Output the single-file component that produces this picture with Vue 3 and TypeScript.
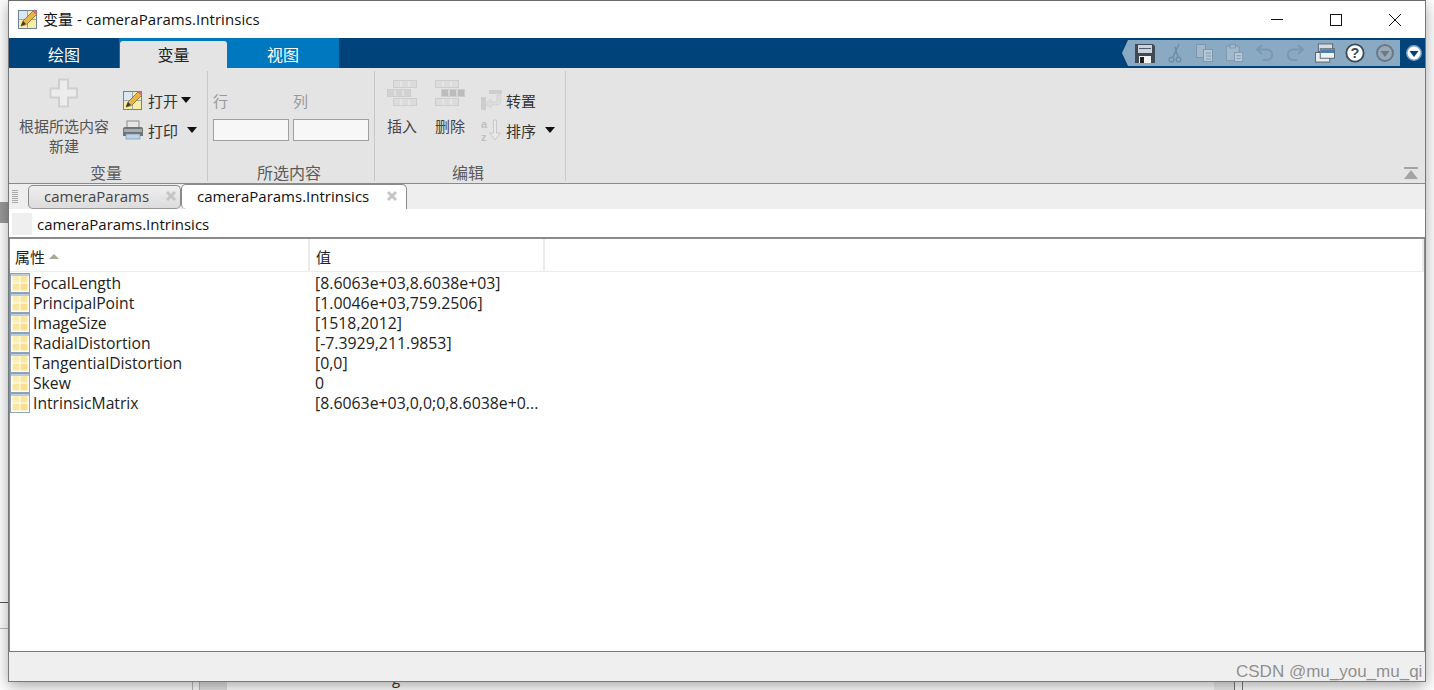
<script setup lang="ts">
const rows: [string, string][] = [
  ['FocalLength', '[8.6063e+03,8.6038e+03]'],
  ['PrincipalPoint', '[1.0046e+03,759.2506]'],
  ['ImageSize', '[1518,2012]'],
  ['RadialDistortion', '[-7.3929,211.9853]'],
  ['TangentialDistortion', '[0,0]'],
  ['Skew', '0'],
  ['IntrinsicMatrix', '[8.6063e+03,0,0;0,8.6038e+0...'],
]
</script>

<template>
  <div class="desk">
    <div class="bg-block"></div>
    <div class="bg-line dark"></div>
    <div class="bg-line light"></div>
    <div class="bg-bottom"><i></i><i></i><b></b></div>
    <span class="bg-g">g</span>
    <div class="bg-right"><i></i><i></i></div>

    <div class="window">
      <header class="titlebar">
        <svg class="app-icon" width="20" height="20" viewBox="0 0 20 20">
          <rect x="0.5" y="1.5" width="18" height="18" fill="#f7eea6" stroke="#6f8299" />
          <rect x="1" y="2" width="8" height="8" fill="#dbe7f3" />
          <path d="M9.5 2v17M1 10.500h17" stroke="#9aa7b5" />
          <path d="M3 17l2-5L15 2l3.500 3.500-10 10z" fill="#e6b64a" stroke="#8a6a28" stroke-width=".8" />
          <path d="M15 2l1.500-1.500 3 3L18 5z" fill="#e0648a" />
          <path d="M3 17l2-5 3 3z" fill="#3a3a3a" />
        </svg>
        <span class="title-text">变量 - cameraParams.Intrinsics</span>
        <div class="win-btns">
          <svg width="59" height="38" viewBox="0 0 59 38"><path d="M23 18.500h12" stroke="#111" /></svg>
          <svg width="59" height="38" viewBox="0 0 59 38"><rect x="23.500" y="13.500" width="11" height="11" fill="none" stroke="#111" /></svg>
          <svg width="59" height="38" viewBox="0 0 59 38"><path d="M23 13l12 12M35 13L23 25" stroke="#111" /></svg>
        </div>
      </header>

      <nav class="tabstrip">
        <div class="rtab">绘图</div>
        <div class="rtab-group">
          <div class="rtab active">变量</div>
          <div class="rtab light">视图</div>
        </div>
        <div class="qa">
          <svg width="20" height="20" viewBox="0 0 20 20"><path d="M0 1h18l2 2v17H0z" fill="#3f4a55" /><rect x="3" y="2" width="14" height="8" fill="#c9d3dc" /><path d="M4 5.500h12" stroke="#4f5b67" /><rect x="4" y="13" width="12" height="7" fill="#f2f2f2" /><rect x="5" y="14" width="4" height="6" fill="#222" /></svg>
          <svg width="20" height="20" viewBox="0 0 20 20" fill="none" stroke="#6f8ca6" stroke-width="1.400"><path d="M14 1l-6 13M10 4l3 10" /><circle cx="6.500" cy="16.500" r="2.400" /><circle cx="13.500" cy="16.500" r="2.400" /></svg>
          <svg width="20" height="20" viewBox="0 0 20 20" fill="#a2b9cc" stroke="#7d97ae"><rect x="1.500" y="1.500" width="9" height="13" /><rect x="8.500" y="6.500" width="9" height="12" fill="#b7c9d8" /><path d="M11 10h5M11 13h5M11 16h5" /></svg>
          <svg width="22" height="22" viewBox="0 0 22 22" fill="#a2b9cc" stroke="#7d97ae"><rect x="1.500" y="3.500" width="14" height="16" /><rect x="5.500" y="1.500" width="6" height="4" /><rect x="10.500" y="10.500" width="9" height="10" fill="#b7c9d8" /><path d="M12.500 14h5M12.500 17h5" /></svg>
          <svg width="20" height="20" viewBox="0 0 20 20" fill="none" stroke="#7d97ae" stroke-width="2"><path d="M7 2L2 6.500 7 11" /><path d="M2 6.500h10a5 5 0 0 1 0 10.500H8" /></svg>
          <svg width="20" height="20" viewBox="0 0 20 20" fill="none" stroke="#7d97ae" stroke-width="2"><path d="M13 2l5 4.500-5 4.500" /><path d="M18 6.500H8a5 5 0 0 0 0 10.500h4" /></svg>
          <svg width="20" height="20" viewBox="0 0 21 20"><rect x="3.500" y="0.500" width="15" height="8" fill="#d7dde3" stroke="#59636d" /><rect x="0.500" y="9.500" width="15" height="10" fill="#e8ebee" stroke="#59636d" /><rect x="5.500" y="5.500" width="15" height="10" fill="#eef3f7" stroke="#59636d" /><rect x="6" y="6" width="14" height="4" fill="#4c7fb0" /></svg>
          <svg width="22" height="22" viewBox="0 0 22 22"><circle cx="11" cy="11" r="9.500" fill="#fff" stroke="#3d4a58" stroke-width="2" /><text x="11" y="16.500" text-anchor="middle" class="q">?</text></svg>
          <svg width="20" height="20" viewBox="0 0 20 20"><circle cx="10" cy="10" r="8" fill="#96a9ba" stroke="#6d7880" stroke-width="2" /><path d="M5.500 8h9L10 14z" fill="#6d7880" /></svg>
        </div>
        <svg class="qa-more" width="18" height="18" viewBox="0 0 18 18"><circle cx="9" cy="9" r="7.200" fill="#fff" stroke="#7ea6c8" stroke-width="1.500" /><path d="M4.500 7h9L9 13z" fill="#00427a" /></svg>
      </nav>

      <section class="ribbon">
        <div class="group g1">
          <div class="group-body">
            <div class="big-col">
              <svg width="30" height="30" viewBox="0 0 30 30"><path d="M10 1.500h9v9h9v9h-9v9h-9v-9H1.500v-9H10z" fill="#ececec" stroke="#cfcfcf" stroke-width="2" /></svg>
              <span class="big-label">根据所选内容<br />新建</span>
            </div>
            <div class="small-col">
              <div class="small-item">
                <svg width="20" height="20" viewBox="0 0 20 20"><rect x="0.500" y="1.500" width="18" height="18" fill="#f7eea6" stroke="#6f8299" /><rect x="1" y="2" width="8" height="8" fill="#dbe7f3" /><path d="M9.500 2v17M1 10.500h17" stroke="#9aa7b5" /><path d="M3 17l2-5L15 2l3.500 3.500-10 10z" fill="#e6b64a" stroke="#8a6a28" stroke-width=".8" /><path d="M15 2l1.500-1.500 3 3L18 5z" fill="#e0648a" /><path d="M3 17l2-5 3 3z" fill="#3a3a3a" /></svg>
                <span>打开</span><i class="caret tight"></i>
              </div>
              <div class="small-item">
                <svg width="20" height="20" viewBox="0 0 20 20"><rect x="4" y="1" width="12" height="7" fill="#e6e6e6" stroke="#8b8b8b" /><path d="M0 9q0-2 2-2h16q2 0 2 2v7H0z" fill="#6f7478" /><rect x="1" y="9" width="18" height="3" fill="#a8adb2" /><rect x="3" y="14" width="14" height="5" fill="#bcd2e6" stroke="#6e8ba6" stroke-width=".6" /></svg>
                <span>打印</span><i class="caret"></i>
              </div>
            </div>
          </div>
          <div class="group-label">变量</div>
        </div>

        <div class="group g2">
          <div class="group-body sel">
            <div class="sel-labels"><span>行</span><span>列</span></div>
            <div class="sel-inputs"><div class="fake-input"></div><div class="fake-input"></div></div>
          </div>
          <div class="group-label">所选内容</div>
        </div>

        <div class="group g3">
          <div class="group-body edit">
            <div class="edit-big">
              <svg width="30" height="28" viewBox="0 0 30 28"><g fill="#dcdcdc" stroke="#cdcdcd"><rect x="6.500" y="1.500" width="23" height="7" /><rect x="0.500" y="10.500" width="23" height="7" fill="#d2d2d2" /><rect x="6.500" y="19.500" width="23" height="7" /></g><path d="M14 2v6M22 2v6M8 11v6M16 11v6M14 20v6M22 20v6" stroke="#eee" /></svg>
              <span>插入</span>
            </div>
            <div class="edit-big">
              <svg width="30" height="28" viewBox="0 0 30 28"><g fill="#dcdcdc" stroke="#cdcdcd"><rect x="0.500" y="1.500" width="23" height="7" /><rect x="6.500" y="10.500" width="23" height="7" fill="#bcbcbc" /><rect x="0.500" y="19.500" width="23" height="7" /></g><path d="M8 2v6M16 2v6M14 11v6M22 11v6M8 20v6M16 20v6" stroke="#eee" /></svg>
              <span>删除</span>
            </div>
            <div class="edit-small">
              <div class="small-item">
                <svg width="21" height="20" viewBox="0 0 21 20"><path d="M0 7h5v13H0zM8 0h13v4H8z" fill="#cdcdcd" /><path d="M16 6v5q0 2-2 2H10v-3l-6 5 6 4v-3h5q5 0 5-5V6z" fill="#dcdcdc" stroke="#cccccc" stroke-width=".6" transform="translate(0 -1)" /></svg>
                <span>转置</span>
              </div>
              <div class="small-item">
                <svg class="sort-icon" width="21" height="25" viewBox="0 0 21 25"><text x="0" y="10" class="az">a</text><text x="0" y="23" class="az">z</text><path d="M12.500 2h3v13h4l-5.500 7-5.500-7h4z" fill="#e8e8e8" stroke="#c8c8c8" /></svg>
                <span>排序</span><i class="caret"></i>
              </div>
            </div>
          </div>
          <div class="group-label">编辑</div>
        </div>
        <div class="ribbon-rest">
          <svg class="collapse" width="14" height="14" viewBox="0 0 14 14"><path d="M0 1h14v2H0zM7 4l7 9H0z" fill="#a4a4a4" /></svg>
        </div>
      </section>

      <div class="doc-tabs">
        <div class="grip"></div>
        <div class="doc-tab inactive">
          <span>cameraParams</span>
          <svg class="x" width="12" height="12" viewBox="0 0 12 12"><path d="M2 2l8 8M10 2l-8 8" stroke="#c4c4c4" stroke-width="3" /></svg>
        </div>
        <div class="doc-tab current">
          <span>cameraParams.Intrinsics</span>
          <svg class="x" width="12" height="12" viewBox="0 0 12 12"><path d="M2 2l8 8M10 2l-8 8" stroke="#c4c4c4" stroke-width="3" /></svg>
        </div>
      </div>

      <div class="crumb"><div class="crumb-box"></div><span>cameraParams.Intrinsics</span></div>

      <main class="table">
        <div class="thead">
          <div class="th c1">属性<i class="sort"></i></div>
          <div class="th c2">值</div>
          <div class="th c3"></div>
        </div>
        <div class="tbody">
          <div v-for="r in rows" :key="r[0]" class="tr">
            <div class="td-name">
              <svg width="20" height="20" viewBox="0 0 20 20"><rect x="0.500" y="0.500" width="19" height="19" fill="#fff" stroke="#8aa3ba" /><rect x="1" y="1" width="18" height="2" fill="#b9cde0" /><rect x="2.500" y="3" width="7" height="6.500" fill="#fbeeb4" /><rect x="10.500" y="3" width="7" height="6.500" fill="#fbe6a0" /><rect x="2.500" y="10.500" width="7" height="7" fill="#fbe6a0" /><rect x="10.500" y="10.500" width="7" height="7" fill="#fbdf8c" /></svg>
              <span>{{ r[0] }}</span>
            </div>
            <div class="td-val">{{ r[1] }}</div>
          </div>
        </div>
      </main>

      <footer class="status"></footer>
    </div>
    <div class="watermark">CSDN @mu_you_mu_qi</div>
  </div>
</template>

<style>
html, body { margin: 0; background: #fff; overflow: hidden; }
</style>

<style scoped>
.desk { position: relative; width: 1434px; height: 690px; overflow: hidden; background: #fff; font-family: "Open Sans", "Noto Sans CJK SC", sans-serif; font-size: 15px; color: #111; }
.bg-block { position: absolute; left: 0; top: 202px; width: 8px; height: 21px; background: #9a9a9a; }
.bg-line { position: absolute; left: 0; width: 8px; height: 1px; }
.bg-line.dark { top: 602px; background: #555; }
.bg-line.light { top: 628px; background: #bbb; }
.bg-bottom { position: absolute; left: 192px; top: 682px; height: 8px; display: flex; }
.bg-bottom i { width: 7px; box-sizing: border-box; border-left: 1px solid #bbb; }
.bg-bottom i + i { width: 1px; }
.bg-bottom b { width: 27px; background: #e2e2e2; }
.bg-g { position: absolute; left: 392px; top: 668px; color: #333; font-size: 15px; }
.bg-right { position: absolute; left: 1214px; top: 682px; height: 8px; width: 36px; display: flex; }
.bg-right::before { content: ""; width: 20px; background: #eee; }
.bg-right i { width: 8px; box-sizing: border-box; border-left: 1px solid #777; }

.window { position: absolute; left: 8px; top: 0; width: 1418px; height: 682px; box-sizing: border-box; border: 1px solid #77787c; border-top: 1px solid #6b6b6b; background: #fff; display: flex; flex-direction: column; box-shadow: 0 4px 14px rgba(0, 0, 0, .35); }

.titlebar { height: 37px; display: flex; align-items: center; background: #fff; padding-left: 9px; flex: none; padding-bottom: 2px; box-sizing: border-box; }
.app-icon { margin-right: 5px; }
.title-text { font-size: 15px; color: #111; letter-spacing: .07px; }
.win-btns { margin-left: auto; display: flex; margin-top: 2px; }

.tabstrip { height: 30px; background: #00427a; display: flex; flex: none; align-items: flex-end; position: relative; }
.rtab { width: 110px; height: 30px; line-height: 34px; text-align: center; color: #fff; font-size: 16px; box-sizing: border-box; }
.rtab-group { display: flex; background: #0078c0; height: 30px; align-items: flex-end; }
.rtab.active { width: 107px; height: 27px; line-height: 28px; margin-left: 1px; background: #e4e4e4; color: #222; border-radius: 3px 3px 0 0; position: relative; }
.rtab.light { background: #0078c0; height: 30px; width: 112px; }
.qa { position: absolute; left: 1113px; top: 2px; width: 278px; height: 26px; background: #8aa9c3; clip-path: polygon(6px 0, 100% 0, 100% 100%, 6px 100%, 0 50%); display: flex; align-items: center; padding-left: 13px; box-sizing: border-box; }
.qa svg { width: 20px; margin-right: 10px; flex: none; }
.qa-more { position: absolute; left: 1396px; top: 6px; }
.q { font: 700 16px "Liberation Sans", sans-serif; fill: #3d4a58; }

.ribbon { height: 116px; background: #e4e4e4; display: flex; flex: none; padding-top: 3px; box-sizing: border-box; border-bottom: 1px solid #8a8a8a; color: #444; }
.group { display: flex; flex-direction: column; border-right: 1px solid #c8c8c8; height: 110px; box-sizing: border-box; }
.g1 { width: 199px; }
.g2 { width: 167px; }
.g3 { width: 191px; }
.group-body { flex: 1; display: flex; }
.group-label { height: 20px; line-height: 20px; text-align: center; font-size: 16px; color: #5a5a5a; margin-bottom: -2px; padding-right: 4px; }
.big-col { width: 110px; display: flex; flex-direction: column; align-items: center; padding-top: 7px; box-sizing: border-box; }
.big-label { text-align: center; line-height: 20px; font-size: 15px; margin-top: 8px; color: #555; }
.small-col { display: flex; flex-direction: column; padding-top: 19px; gap: 10px; margin-left: 4px; }
.small-item { display: flex; align-items: center; gap: 5px; height: 20px; font-size: 15px; color: #333; }
.caret { width: 0; height: 0; border: 5px solid transparent; border-top: 6px solid #111; border-bottom: 0; margin-left: 4px; }
.caret.tight { margin-left: -2px; }
.sel { flex-direction: column; padding: 19px 0 0 5px; }
.sel-labels { display: flex; color: #999; font-size: 15px; height: 20px; }
.sel-labels span { width: 80px; }
.sel-inputs { display: flex; gap: 4px; margin-top: 9px; }
.fake-input { width: 74px; height: 20px; background: #f7f7f7; border: 1px solid #a0a0a0; }
.edit { padding-top: 8px; }
.edit-big { width: 48px; display: flex; flex-direction: column; align-items: center; font-size: 15px; gap: 9px; color: #444; line-height: 20px; }
.edit-big:first-child { margin-left: 3px; }
.edit-small { display: flex; flex-direction: column; gap: 10px; padding-top: 11px; margin-left: 7px; }
.edit-small .small-item { gap: 4px; }
.edit-small .caret { margin-left: 5px; }
.sort-icon { flex: none; }
.ribbon-rest { flex: 1; position: relative; }
.collapse { position: absolute; right: 7px; bottom: 3px; }
.az { font: 700 11px "Liberation Sans", sans-serif; fill: #c0c0c0; }

.doc-tabs { height: 25px; background: #eee; display: flex; align-items: flex-end; flex: none; box-sizing: border-box; padding-left: 3px; position: relative; }
.grip { width: 6px; height: 14px; margin: 0 10px 5px 0; background: repeating-linear-gradient(#aaa 0 1px, transparent 1px 2px); }
.doc-tab { display: flex; align-items: center; box-sizing: border-box; height: 24px; border: 1px solid #8a8a8a; border-bottom: 0; border-radius: 5px 5px 0 0; font-size: 15px; padding-bottom: 2px; }
.doc-tab.inactive { width: 153px; background: linear-gradient(#efefef, #dcdcdc); color: #444; padding-left: 15px; border-bottom: 1px solid #999; border-radius: 5px 5px 5px 5px; }
.doc-tab.current { width: 226px; background: #fff; color: #111; padding-left: 15px; height: 25px; border-radius: 5px 5px 0 5px; }
.x { margin-left: auto; margin-right: 3px; flex: none; }
.current .x { margin-right: 8px; }

.crumb { height: 30px; background: #fff; display: flex; align-items: center; padding: 2px 0 0 3px; gap: 5px; flex: none; box-sizing: border-box; border-bottom: 2px solid #8a8a8a; }
.crumb-box { width: 20px; height: 22px; background: #efefef; }

.table { flex: 1; display: flex; flex-direction: column; border-left: 1px solid #8a8a8a; border-right: 1px solid #8a8a8a; background: #fff; min-height: 0; }
.thead { height: 33px; display: flex; flex: none; border-bottom: 1px solid #ececec; box-sizing: border-box; }
.th { display: flex; align-items: center; font-size: 15px; color: #222; box-sizing: border-box; padding-left: 5px; padding-top: 3px; border-right: 2px solid #ececec; }
.c1 { width: 300px; }
.c2 { width: 235px; padding-left: 6px; }
.c3 { flex: 1; }
.sort { width: 0; height: 0; border: 5px solid transparent; border-bottom: 5px solid #a8a898; border-top: 0; margin-left: 4px; }
.tbody { padding-top: 1px; }
.tr { height: 20px; display: flex; align-items: center; font-size: 15.700px; color: #222; }
.td-name { width: 305px; display: flex; align-items: center; gap: 3px; }
.td-val { font-size: 15.850px; }

.status { height: 30px; background: #efefef; border-top: 1px solid #77787c; flex: none; box-sizing: border-box; }
.watermark { position: absolute; left: 1236px; top: 662px; font: 17px "Liberation Sans", sans-serif; color: rgba(110, 110, 110, .75); white-space: nowrap; }
</style>
